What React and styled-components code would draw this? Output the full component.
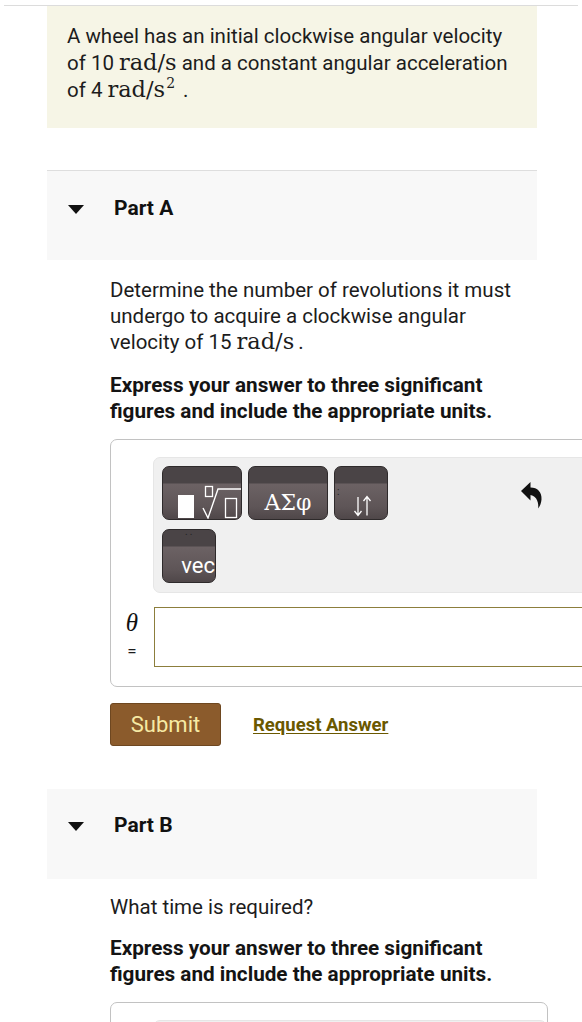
import React from 'react';
import styled, { createGlobalStyle } from 'styled-components';

const GlobalStyle = createGlobalStyle`
  html, body {
    margin: 0;
    padding: 0;
    background: #ffffff;
    overflow: hidden;
  }
  body {
    font-family: Roboto, "Liberation Sans", Arial, sans-serif;
    color: #1c1c1c;
  }
`;

// Whole page, clipped to the window
const Page = styled.div`
  width: 582px;
  height: 1022px;
  overflow: hidden;
  padding-top: 5px;
  box-sizing: border-box;
`;

// Thin rule on top of the problem
const TopRule = styled.div`
  margin-left: 4px;
  width: 574px;
  height: 1px;
  background: #dcdcdc;
`;

const Column = styled.div`
  margin-left: 47px;
  width: 490px;
`;

// Problem statement block
const Statement = styled.div`
  height: 122px;
  box-sizing: border-box;
  background: #f6f5e6;
  padding: 17px 15px 0 20px;
  font-size: 20.5px;
  line-height: 27px;
`;

// Inline math (rad/s)
const Math = styled.span`
  font-family: "DejaVu Serif", "Liberation Serif", serif;
  font-size: 22.5px;
  line-height: 20px;
  margin: 0 ${(p) => p.$space || 5}px 0 5px;
`;

const Sup = styled.span`
  position: relative;
  top: -9px;
  margin-left: 1px;
  font-size: 14px;
`;

// Collapsible part header
const PartHeader = styled.div`
  margin-top: ${(p) => p.$top}px;
  height: 90px;
  box-sizing: border-box;
  background: #f8f8f8;
  border-top: ${(p) => (p.$border ? '1px solid #dedede' : 'none')};
  padding: ${(p) => (p.$border ? 23 : 22)}px 0 0 21px;
  display: flex;
  align-items: flex-start;
  gap: 30px;
`;

const Caret = styled.span`
  width: 0;
  height: 0;
  margin-top: 11px;
  border-left: 8px solid transparent;
  border-right: 8px solid transparent;
  border-top: 9px solid #111;
`;

const PartTitle = styled.span`
  font-size: 21px;
  font-weight: 700;
  line-height: 28px;
  color: #111;
`;

const PartBody = styled.div`
  padding-left: 63px;
  width: 415px;
`;

const Prompt = styled.p`
  margin: ${(p) => p.$top}px 0 0 0;
  font-size: 20.5px;
  line-height: 26px;
`;

const Instruction = styled.p`
  margin: ${(p) => (p.$tight ? 15 : 17)}px 0 0 0;
  font-size: 20.7px;
  line-height: 26px;
  font-weight: 700;
  color: #141414;
`;

// Answer area
const AnswerBox = styled.div`
  margin-top: 15px;
  width: ${(p) => p.$width}px;
  box-sizing: border-box;
  border: 1px solid #c2c2c2;
  border-radius: 7px;
  padding: 17px 0 19px 42px;
`;

const Toolbar = styled.div`
  background: #f0f0f0;
  border: 1px solid #e6e6e6;
  border-radius: 7px;
  padding: 8px 0 9px 8px;
  display: grid;
  grid-template-columns: auto 1fr;
`;

const KeyGrid = styled.div`
  display: flex;
  flex-wrap: wrap;
  width: 240px;
  gap: 9px 6px;
`;

const Key = styled.div`
  position: relative;
  width: ${(p) => p.$w}px;
  height: 54px;
  box-sizing: border-box;
  border: 1px solid #2e2a2b;
  border-radius: 7px;
  overflow: hidden;
  background: linear-gradient(#4a4446 0, #4a4446 16px, #6c6264 17px, #5e5557 40px, #4f4749 100%);
  display: flex;
  align-items: flex-end;
  justify-content: ${(p) => p.$justify || 'center'};
  padding: 0 ${(p) => p.$pr || 0}px ${(p) => (p.$pb === undefined ? 2 : p.$pb)}px 0;
  color: #ffffff;
`;

const KeyText = styled.span`
  font-family: ${(p) => (p.$serif ? '"DejaVu Serif", "Liberation Serif", serif' : 'Roboto, "Liberation Sans", sans-serif')};
  font-size: ${(p) => p.$size}px;
  line-height: 30px;
  letter-spacing: ${(p) => p.$ls || 0}px;
`;

const Dots = styled.span`
  position: absolute;
  top: ${(p) => p.$top}px;
  left: ${(p) => p.$left}px;
  font-size: 10px;
  line-height: 10px;
  color: #222;
  letter-spacing: 2px;
`;

const UndoSlot = styled.div`
  display: flex;
  justify-content: flex-start;
  padding: 16px 0 0 119px;
`;

const InputRow = styled.div`
  margin-top: 14px;
  display: flex;
  align-items: stretch;
`;

const VarLabel = styled.div`
  width: 44px;
  margin-left: -43px;
  display: flex;
  flex-direction: column;
  align-items: center;
  padding-top: 3px;
`;

const Theta = styled.span`
  font-family: "Liberation Serif", "DejaVu Serif", serif;
  font-style: italic;
  font-size: 25px;
  line-height: 26px;
  color: #111;
`;

const Equals = styled.span`
  font-size: 17px;
  line-height: 22px;
  margin-top: 4px;
`;

const Field = styled.div`
  flex: 1;
  height: 60px;
  box-sizing: border-box;
  border: 1px solid #8c7e3c;
  background: #fff;
`;

const Actions = styled.div`
  margin-top: 16px;
  display: flex;
  align-items: center;
  gap: 32px;
`;

const SubmitButton = styled.button`
  width: 111px;
  height: 43px;
  background: #8b5b2c;
  border: 1px solid #6e4720;
  border-radius: 3px;
  color: #f6eaa4;
  font-family: Roboto, "Liberation Sans", sans-serif;
  font-size: 22px;
  padding: 0;
`;

const RequestLink = styled.a`
  font-size: 18.5px;
  font-weight: 700;
  color: #6a5800;
  text-decoration: underline;
  text-underline-offset: 2px;
  margin-top: 1px;
`;

const RootIcon = () => (
  <svg width="78" height="52" viewBox="0 0 78 52">
    <rect x="15" y="28" width="16" height="23" fill="#fff" />
    <rect x="42.5" y="19.5" width="7" height="10" fill="none" stroke="#fff" strokeWidth="1.3" />
    <path d="M40 41 L45 51 L55 22 L78 22" fill="none" stroke="#fff" strokeWidth="1.4" />
    <rect x="62.5" y="31.5" width="11" height="19" fill="none" stroke="#fff" strokeWidth="1.3" />
  </svg>
);

const UndoIcon = () => (
  <svg width="22" height="27" viewBox="0 0 22 27">
    <path d="M0 9 L9.5 0 L9.5 5.5 C16.5 5.5 21 10 20.5 17.5 C20.2 21 19 24 17.2 26.5 C17.8 21.5 16.4 14.5 9.5 13 L9.5 18.5 Z" fill="#111" />
  </svg>
);

const ArrowsIcon = () => (
  <svg width="20" height="22" viewBox="0 0 20 22">
    <path d="M5 2 L5 20 M1.5 16 L5 20.5 L8.5 16" fill="none" stroke="#fff" strokeWidth="1.3" />
    <path d="M14 20.5 L14 2 M10.5 6 L14 1.5 L17.5 6" fill="none" stroke="#fff" strokeWidth="1.3" />
  </svg>
);

const MathToolbar = () => (
  <Toolbar>
    <KeyGrid>
      <Key $w={80} $pb={0}>
        <RootIcon />
      </Key>
      <Key $w={80} $pb={1}>
        <KeyText $serif $size={22}>ΑΣφ</KeyText>
      </Key>
      <Key $w={54} $justify="flex-end" $pr={14}>
        <Dots $top={20} $left={2}>:</Dots>
        <ArrowsIcon />
      </Key>
      <Key $w={54} $justify="flex-end" $pr={0} $pb={1}>
        <Dots $top={-3} $left={22}>..</Dots>
        <KeyText $size={22}>vec</KeyText>
      </Key>
    </KeyGrid>
    <UndoSlot>
      <UndoIcon />
    </UndoSlot>
  </Toolbar>
);

const App = () => (
  <Page>
    <GlobalStyle />
    <TopRule />
    <Column>
      <Statement>
        A wheel has an initial clockwise angular velocity of 10<Math>rad/s</Math>and a constant angular acceleration
        of 4<Math $space={8}>rad/s<Sup>2</Sup></Math>.
      </Statement>

      {/* Part A */}
      <PartHeader $top={42} $border>
        <Caret />
        <PartTitle>Part A</PartTitle>
      </PartHeader>
      <PartBody>
        <Prompt $top={17}>
          Determine the number of revolutions it must undergo to acquire a clockwise angular velocity of 15
          <Math $space={4}>rad/s</Math>.
        </Prompt>
        <Instruction>Express your answer to three significant figures and include the appropriate units.</Instruction>
        <AnswerBox $width={540}>
          <MathToolbar />
          <InputRow>
            <VarLabel>
              <Theta>θ</Theta>
              <Equals>=</Equals>
            </VarLabel>
            <Field />
          </InputRow>
        </AnswerBox>
        <Actions>
          <SubmitButton>Submit</SubmitButton>
          <RequestLink href="#">Request Answer</RequestLink>
        </Actions>
      </PartBody>

      {/* Part B */}
      <PartHeader $top={43}>
        <Caret />
        <PartTitle>Part B</PartTitle>
      </PartHeader>
      <PartBody>
        <Prompt $top={15}>What time is required?</Prompt>
        <Instruction $tight>Express your answer to three significant figures and include the appropriate units.</Instruction>
        <AnswerBox $width={438}>
          <MathToolbar />
        </AnswerBox>
      </PartBody>
    </Column>
  </Page>
);

export default App;
